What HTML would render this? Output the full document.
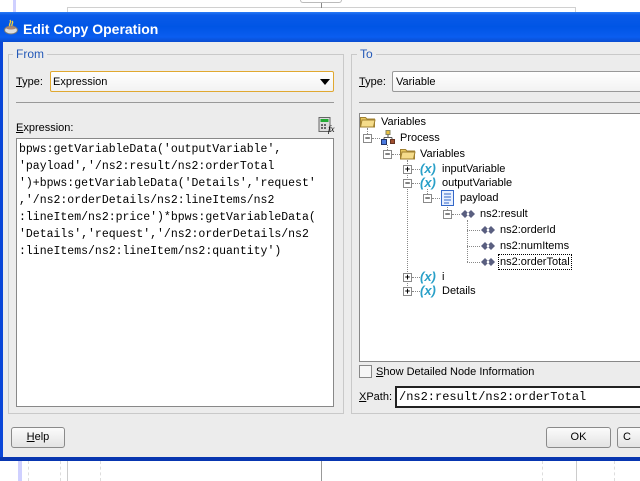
<!DOCTYPE html>
<html><head><meta charset="utf-8"><style>
*{margin:0;padding:0;box-sizing:border-box}
body{width:640px;height:481px;overflow:hidden;background:#fff;position:relative;font-family:"Liberation Sans",sans-serif;font-size:11px;color:#000}
.a{position:absolute}
.mono{font-family:"Liberation Mono",monospace}
.t{position:absolute;white-space:nowrap;line-height:14px}
.btn{position:absolute;border:1px solid #8a8a8a;border-radius:3px;background:linear-gradient(#fbfbfb,#e3e3e3);text-align:center;line-height:19px;font-size:11px}
.fs{position:absolute;border:1px solid #c9c9c9}
.leg{position:absolute;background:#ececec;color:#2459b8;padding:0 3px;font-size:12px;line-height:14px}
.exp{position:absolute;width:9px;height:9px;border:1px solid #8a8a8a;background:#fff;font-size:9px;line-height:7px;text-align:center;font-weight:bold}
.dv{position:absolute;border-left:1px dotted #888}
.dh{position:absolute;border-top:1px dotted #888}
.x{position:absolute;color:#2aa0c8;font-weight:bold;font-style:italic;font-size:13px;line-height:14px}
</style></head><body>
<div class="a" style="left:13px;top:0;width:3px;height:12px;background:#cfd0ff"></div>
<div class="a" style="left:67px;top:7px;width:509px;height:6px;border:1px solid #d0d0d0;border-bottom:none"></div>
<div class="a" style="left:300px;top:0;width:42px;height:3px;border:1px solid #bbb;border-top:none;border-radius:0 0 5px 5px"></div>
<div class="a" style="left:321px;top:3px;width:1px;height:5px;background:#888"></div>
<div class="a" style="left:18px;top:461px;width:4px;height:20px;background:#cfd0ff"></div>
<div class="a" style="left:28px;top:461px;height:20px;border-left:1px dashed #ddd"></div>
<div class="a" style="left:60px;top:461px;height:20px;border-left:1px dashed #ddd"></div>
<div class="a" style="left:67px;top:461px;height:20px;border-left:1px solid #ccc"></div>
<div class="a" style="left:100px;top:461px;height:20px;border-left:1px dashed #ddd"></div>
<div class="a" style="left:321px;top:461px;height:20px;border-left:1px solid #999"></div>
<div class="a" style="left:542px;top:461px;height:20px;border-left:1px dashed #ddd"></div>
<div class="a" style="left:576px;top:461px;height:20px;border-left:1px solid #ccc"></div>
<div class="a" style="left:614px;top:461px;height:20px;border-left:1px dashed #ddd"></div>

<div class="a" style="left:0;top:12px;width:640px;height:449px;background:#0a46d8;"></div>
<div class="a" style="left:0;top:12px;width:640px;height:30px;background:linear-gradient(#2a7cf6 0,#0a5ae8 3px,#0055e5 15px,#0a5df0 25px,#0a4cd0 30px)"></div>
<div class="a" style="left:3px;top:42px;width:637px;height:415px;background:#ececec"></div>
<div class="a" style="left:0;top:457px;width:640px;height:4px;background:#0836b0"></div>
<svg class="a" style="left:3px;top:19px" width="16" height="16" viewBox="0 0 16 16"><ellipse cx="8" cy="11" rx="6.5" ry="4" fill="#ddd" stroke="#777"/><ellipse cx="8" cy="9" rx="5" ry="1.5" fill="#a87"/><path d="M7 7 C5 5,9 4,7 1 M9 7 C8 5,11 4,9 2" stroke="#f5d040" stroke-width="1.3" fill="none"/></svg>
<div class="t" style="left:23px;top:21px;color:#fff;font-weight:bold;font-size:14px;line-height:16px">Edit Copy Operation</div>

<div class="fs" style="left:8px;top:54px;width:336px;height:360px"></div>
<div class="leg" style="left:13px;top:47px">From</div>
<div class="t" style="left:16px;top:75px"><u>T</u>ype:</div>
<div class="a" style="left:50px;top:71px;width:284px;height:21px;border:1px solid #e0a830;border-radius:2px;background:linear-gradient(#fff,#f2f2f2)"></div>
<div class="t" style="left:53px;top:75px">Expression</div>
<div class="a" style="left:320px;top:79px;width:0;height:0;border-left:5px solid transparent;border-right:5px solid transparent;border-top:6px solid #000"></div>
<div class="a" style="left:16px;top:102px;width:318px;height:1px;background:#999"></div>
<div class="t" style="left:16px;top:121px"><u>E</u>xpression:</div>
<svg class="a" style="left:318px;top:117px" width="17" height="17" viewBox="0 0 17 17"><rect x="1" y="0.5" width="11" height="14" fill="#ddd" stroke="#666"/><rect x="2.5" y="2" width="8" height="3" fill="#2a3"/><g fill="#666"><rect x="3" y="7" width="2" height="2"/><rect x="6" y="7" width="2" height="2"/><rect x="3" y="10" width="2" height="2"/><rect x="6" y="10" width="2" height="2"/></g><text x="10" y="15" font-size="9" font-style="italic" font-family="Liberation Serif">fx</text></svg>
<div class="a" style="left:16px;top:138px;width:318px;height:269px;background:#fff;border:1px solid #888"></div>
<div class="a mono" style="left:19px;top:141px;font-size:11.5px;line-height:17px;white-space:pre">bpws:getVariableData('outputVariable',
'payload','/ns2:result/ns2:orderTotal
')+bpws:getVariableData('Details','request'
,'/ns2:orderDetails/ns2:lineItems/ns2
:lineItem/ns2:price')*bpws:getVariableData(
'Details','request','/ns2:orderDetails/ns2
:lineItems/ns2:lineItem/ns2:quantity')</div>

<div class="fs" style="left:351px;top:54px;width:295px;height:360px"></div>
<div class="leg" style="left:357px;top:47px">To</div>
<div class="t" style="left:359px;top:75px"><u>T</u>ype:</div>
<div class="a" style="left:392px;top:71px;width:260px;height:21px;border:1px solid #999;border-radius:2px;background:linear-gradient(#fff,#f2f2f2)"></div>
<div class="t" style="left:396px;top:75px">Variable</div>
<div class="a" style="left:359px;top:102px;width:290px;height:1px;background:#999"></div>
<div class="a" style="left:359px;top:113px;width:290px;height:249px;background:#fff;border:1px solid #888"></div>

<div class="dv" style="left:367px;top:128px;height:10px"></div>
<div class="dv" style="left:387px;top:145px;height:9px"></div>
<div class="dv" style="left:407px;top:160px;height:132px"></div>
<div class="dv" style="left:427px;top:189px;height:9px"></div>
<div class="dv" style="left:447px;top:204px;height:10px"></div>
<div class="dv" style="left:467px;top:220px;height:42px"></div>
<div class="dh" style="left:372px;top:138px;width:8px"></div>
<div class="dh" style="left:392px;top:154px;width:8px"></div>
<div class="dh" style="left:412px;top:169px;width:8px"></div>
<div class="dh" style="left:412px;top:183px;width:8px"></div>
<div class="dh" style="left:432px;top:198px;width:8px"></div>
<div class="dh" style="left:452px;top:214px;width:8px"></div>
<div class="dh" style="left:467px;top:230px;width:13px"></div>
<div class="dh" style="left:467px;top:246px;width:13px"></div>
<div class="dh" style="left:467px;top:262px;width:13px"></div>
<div class="dh" style="left:412px;top:277px;width:8px"></div>
<div class="dh" style="left:412px;top:291px;width:8px"></div>

<div class="exp" style="left:363px;top:134px">−</div>
<div class="exp" style="left:383px;top:150px">−</div>
<div class="exp" style="left:403px;top:165px">+</div>
<div class="exp" style="left:403px;top:179px">−</div>
<div class="exp" style="left:423px;top:194px">−</div>
<div class="exp" style="left:443px;top:210px">−</div>
<div class="exp" style="left:403px;top:273px">+</div>
<div class="exp" style="left:403px;top:287px">+</div>

<svg class="a" style="left:360px;top:115px" width="16" height="13"><path d="M0.5 2.5h5l1.5 1.5h7.5v8h-14z" fill="#e8c860" stroke="#a08030"/><path d="M2 5h13l-1.5 7h-13z" fill="#f5dc8a" stroke="#a08030"/></svg>
<svg class="a" style="left:400px;top:147px" width="16" height="13"><path d="M0.5 2.5h5l1.5 1.5h7.5v8h-14z" fill="#e8c860" stroke="#a08030"/><path d="M2 5h13l-1.5 7h-13z" fill="#f5dc8a" stroke="#a08030"/></svg>
<svg class="a" style="left:381px;top:130px" width="15" height="15"><rect x="5" y="0.5" width="4" height="4" fill="#e8c040" stroke="#886"/><path d="M7 4.5v3M3 7.5h8M3 7.5v2M11 7.5v2" stroke="#555" fill="none"/><rect x="0.5" y="9.5" width="5" height="5" fill="#4a7ae0" stroke="#236"/><rect x="9.5" y="9.5" width="4" height="4" fill="#a05030" stroke="#632"/></svg>
<div class="x" style="left:420px;top:162px">(x)</div>
<div class="x" style="left:420px;top:176px">(x)</div>
<div class="x" style="left:420px;top:270px">(x)</div>
<div class="x" style="left:420px;top:284px">(x)</div>
<svg class="a" style="left:441px;top:190px" width="14" height="16"><rect x="0.5" y="0.5" width="12" height="15" fill="#e8f0ff" stroke="#3468c8"/><path d="M3 4h7M3 7h7M3 10h7M3 13h5" stroke="#3468c8"/></svg>
<svg class="a" style="left:460px;top:209px" width="16" height="10"><path d="M1 5l4-4 4 4-4 4zM7 5l4-4 4 4-4 4z" fill="#5a5f80"/><circle cx="8" cy="5" r="1.3" fill="#fff"/></svg>
<svg class="a" style="left:480px;top:225px" width="16" height="10"><path d="M1 5l4-4 4 4-4 4zM7 5l4-4 4 4-4 4z" fill="#5a5f80"/><circle cx="8" cy="5" r="1.3" fill="#fff"/></svg>
<svg class="a" style="left:480px;top:241px" width="16" height="10"><path d="M1 5l4-4 4 4-4 4zM7 5l4-4 4 4-4 4z" fill="#5a5f80"/><circle cx="8" cy="5" r="1.3" fill="#fff"/></svg>
<svg class="a" style="left:480px;top:257px" width="16" height="10"><path d="M1 5l4-4 4 4-4 4zM7 5l4-4 4 4-4 4z" fill="#5a5f80"/><circle cx="8" cy="5" r="1.3" fill="#fff"/></svg>

<div class="t" style="left:381px;top:115px">Variables</div>
<div class="t" style="left:400px;top:131px">Process</div>
<div class="t" style="left:420px;top:147px">Variables</div>
<div class="t" style="left:442px;top:162px">inputVariable</div>
<div class="t" style="left:442px;top:176px">outputVariable</div>
<div class="t" style="left:460px;top:191px">payload</div>
<div class="t" style="left:480px;top:207px">ns2:result</div>
<div class="t" style="left:500px;top:223px">ns2:orderId</div>
<div class="t" style="left:500px;top:239px">ns2:numItems</div>
<div class="t" style="left:498px;top:254px;border:1px dotted #000;padding:0 1px;height:16px">ns2:orderTotal</div>
<div class="t" style="left:442px;top:270px">i</div>
<div class="t" style="left:442px;top:284px">Details</div>

<div class="a" style="left:359px;top:365px;width:13px;height:13px;border:1px solid #888;background:#f6f6f6"></div>
<div class="t" style="left:376px;top:365px"><u>S</u>how Detailed Node Information</div>
<div class="t" style="left:359px;top:390px"><u>X</u>Path:</div>
<div class="a" style="left:395px;top:386px;width:260px;height:22px;background:#fff;border:2px solid #222;border-right:none"></div>
<div class="a mono" style="left:399px;top:390px;font-size:12px;line-height:14px;white-space:pre">/ns2:result/ns2:orderTotal</div>

<div class="btn" style="left:11px;top:427px;width:54px;height:21px"><u>H</u>elp</div>
<div class="btn" style="left:546px;top:427px;width:65px;height:21px">OK</div>
<div class="btn" style="left:617px;top:427px;width:60px;height:21px;text-align:left;padding-left:5px">C</div>
</body></html>
